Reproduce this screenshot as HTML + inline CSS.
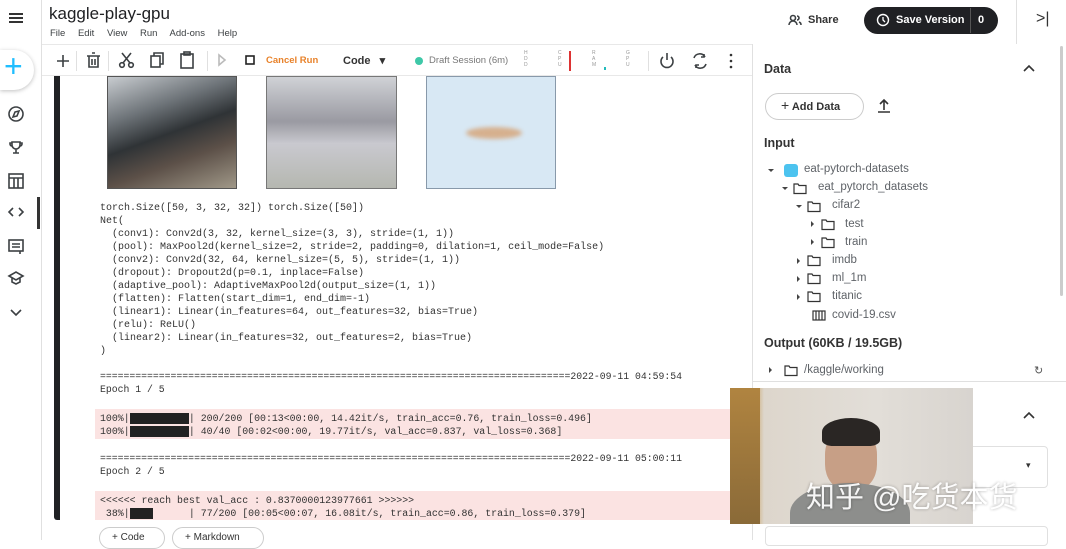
<!DOCTYPE html>
<html><head><meta charset="utf-8"><style>
*{margin:0;padding:0;box-sizing:border-box}
body{width:1066px;height:540px;overflow:hidden;background:#fff;font-family:"Liberation Sans",sans-serif;position:relative;color:#202124}
.a{position:absolute}
.mono{font-family:"Liberation Mono",monospace;font-size:10px;line-height:13px;color:#333;white-space:pre}
.ic{stroke:#3c4043;fill:none;stroke-width:1.6}
.tree{font-size:11.5px;color:#5f6368;white-space:nowrap}
</style></head><body>
<!-- left sidebar -->
<div class="a" style="left:41px;top:0;width:1px;height:540px;background:#e0e0e0"></div>
<div class="a" style="left:9px;top:13px;width:14px;height:2px;background:#333;box-shadow:0 4px 0 #333,0 8px 0 #333"></div>
<div class="a" style="left:0;top:50px;width:34px;height:40px;border-radius:0 20px 20px 0;box-shadow:0 1px 4px rgba(0,0,0,.25);background:#fff"></div>
<div class="a" style="left:4px;top:48px;font-size:32px;color:#20beff;font-weight:300">+</div>
<svg class="a" style="left:6px;top:104px" width="20" height="220" viewBox="0 0 20 220">
<g class="ic" stroke-width="1.5"><circle cx="10" cy="10" r="7"/><path d="M13 7l-2 5-4 1 2-5z"/>
<path d="M6 38h8v3a4 4 0 0 1-8 0zM10 45v4M7 49h6M6 39H4v1a2 2 0 0 0 2 2M14 39h2v1a2 2 0 0 1-2 2"/>
<rect x="3" y="70" width="14" height="14"/><path d="M3 74h14M8 74v10M12 74v10"/>
<path d="M7 104l-4 4 4 4M13 104l4 4-4 4"/>
<rect x="3" y="136" width="14" height="11"/><path d="M6 140h8M6 143h8M14 147v3"/>
<path d="M3 172l7-4 7 4-7 4zM6 174v4l4 2 4-2v-4"/>
<path d="M5 206l5 5 5-5"/></g></svg>
<div class="a" style="left:37px;top:197px;width:3px;height:32px;background:#333"></div>
<!-- title -->
<div class="a" style="left:49px;top:4px;font-size:17px;color:#202124">kaggle-play-gpu</div>
<div class="a" style="left:50px;top:28px;font-size:9.5px;color:#3c4043;word-spacing:10px">File Edit View Run Add-ons Help</div>
<!-- share/save -->
<svg class="a" style="left:788px;top:14px" width="14" height="12"><g class="ic" stroke-width="1.3"><circle cx="5" cy="4" r="2.5"/><path d="M1 11a4 4 0 0 1 8 0M9 2a2 2 0 0 1 0 4M11 8a3 3 0 0 1 2 3"/></g></svg>
<div class="a" style="left:808px;top:14px;font-size:11px;font-weight:bold;color:#333">Share</div>
<div class="a" style="left:864px;top:7px;width:134px;height:27px;border-radius:14px;background:#202124"></div>
<svg class="a" style="left:876px;top:13px" width="14" height="14"><circle cx="7" cy="7" r="5.5" stroke="#fff" fill="none" stroke-width="1.4"/><path d="M7 4v3l2 2" stroke="#fff" fill="none" stroke-width="1.3"/></svg>
<div class="a" style="left:896px;top:14px;font-size:11px;font-weight:bold;color:#fff">Save Version</div>
<div class="a" style="left:970px;top:8px;width:1px;height:25px;background:#555"></div>
<div class="a" style="left:978px;top:14px;font-size:11px;font-weight:bold;color:#fff">0</div>
<div class="a" style="left:1016px;top:0;width:1px;height:44px;background:#e0e0e0"></div>
<div class="a" style="left:1036px;top:10px;font-size:16px;color:#333">&gt;|</div>
<!-- toolbar -->
<div class="a" style="left:42px;top:44px;width:710px;height:1px;background:#e8e8e8"></div>
<div class="a" style="left:42px;top:75px;width:710px;height:1px;background:#e8e8e8"></div>
<svg class="a" style="left:50px;top:50px" width="700" height="22" viewBox="50 50 700 22">
<g class="ic" stroke-width="1.5">
<path d="M63 55v12M57 61h12"/>
<path d="M87 56h13M89 56v11h9V56M92 53h3M92 59v6M95 59v6"/>
<circle cx="122" cy="65" r="2.3"/><circle cx="131" cy="65" r="2.3"/><path d="M123 63l8-10M130 63l-8-10"/>
<rect x="151" y="56" width="9" height="11"/><path d="M154 56v-3h9v11h-3"/>
<rect x="181" y="54" width="12" height="14"/><rect x="184" y="52" width="6" height="3"/>
<path d="M219 55l6 5-6 5z" stroke="#bbb"/>
<rect x="246" y="56" width="8" height="8" stroke="#222"/>
<path d="M663 57a6 6 0 1 0 8 0M667 53v7"/>
<path d="M694 58a6 6 0 0 1 11-1M706 64a6 6 0 0 1-11 1M704 54v3h-3M696 68v-3h3"/>
</g>
<circle cx="731" cy="55" r="1.3" fill="#333"/><circle cx="731" cy="61" r="1.3" fill="#333"/><circle cx="731" cy="67" r="1.3" fill="#333"/>
<circle cx="419" cy="61" r="4" fill="#3ec8a8"/>
<rect x="569" y="51" width="2" height="20" fill="#d33"/>
<rect x="604" y="67" width="2" height="3" fill="#2bb"/>
</svg>
<div class="a" style="left:76px;top:51px;width:1px;height:20px;background:#e0e0e0"></div>
<div class="a" style="left:108px;top:51px;width:1px;height:20px;background:#e0e0e0"></div>
<div class="a" style="left:207px;top:51px;width:1px;height:20px;background:#e0e0e0"></div>
<div class="a" style="left:266px;top:55px;font-size:9.5px;font-weight:bold;color:#e8822a">Cancel Run</div>
<div class="a" style="left:343px;top:54px;font-size:11px;font-weight:bold;color:#333">Code &nbsp;&nbsp;▾</div>
<div class="a" style="left:429px;top:55px;font-size:9.5px;color:#777">Draft Session (6m)</div>
<div class="a" style="left:524px;top:50px;font-size:5px;line-height:6px;color:#999">H<br>D<br>D</div>
<div class="a" style="left:558px;top:50px;font-size:5px;line-height:6px;color:#999">C<br>P<br>U</div>
<div class="a" style="left:592px;top:50px;font-size:5px;line-height:6px;color:#999">R<br>A<br>M</div>
<div class="a" style="left:626px;top:50px;font-size:5px;line-height:6px;color:#999">G<br>P<br>U</div>
<div class="a" style="left:648px;top:51px;width:1px;height:20px;background:#e0e0e0"></div>
<!-- cell -->
<div class="a" style="left:54px;top:76px;width:6px;height:444px;background:#202124;border-radius:0 0 0 3px"></div>
<div class="a" style="left:107px;top:76px;width:130px;height:113px;border:1px solid #555;background:linear-gradient(160deg,#c8ccd0 0%,#6d7378 30%,#2f3336 50%,#5c5048 70%,#a09888 100%)"></div>
<div class="a" style="left:266px;top:76px;width:131px;height:113px;border:1px solid #777;background:linear-gradient(180deg,#d0d2d6 0%,#9a9aa2 40%,#c9c9cf 60%,#b5b7b0 100%)"></div>
<div class="a" style="left:426px;top:76px;width:130px;height:113px;border:1px solid #8899aa;background:#d8e8f4"></div>
<div class="a" style="left:466px;top:127px;width:56px;height:12px;border-radius:50%;background:#d6b08e;filter:blur(2px)"></div>
<div class="a mono" style="left:100px;top:202px">torch.Size([50, 3, 32, 32]) torch.Size([50])
Net(
  (conv1): Conv2d(3, 32, kernel_size=(3, 3), stride=(1, 1))
  (pool): MaxPool2d(kernel_size=2, stride=2, padding=0, dilation=1, ceil_mode=False)
  (conv2): Conv2d(32, 64, kernel_size=(5, 5), stride=(1, 1))
  (dropout): Dropout2d(p=0.1, inplace=False)
  (adaptive_pool): AdaptiveMaxPool2d(output_size=(1, 1))
  (flatten): Flatten(start_dim=1, end_dim=-1)
  (linear1): Linear(in_features=64, out_features=32, bias=True)
  (relu): ReLU()
  (linear2): Linear(in_features=32, out_features=2, bias=True)
)</div>
<div class="a mono" style="left:100px;top:370px;font-size:9.8px">================================================================================2022-09-11 04:59:54
Epoch 1 / 5</div>
<div class="a" style="left:95px;top:409px;width:635px;height:30px;background:#fbe3e2"></div>
<div class="a mono" style="left:100px;top:412px;font-size:9.9px">100%|<span style="background:#222">          </span>| 200/200 [00:13&lt;00:00, 14.42it/s, train_acc=0.76, train_loss=0.496]
100%|<span style="background:#222">          </span>| 40/40 [00:02&lt;00:00, 19.77it/s, val_acc=0.837, val_loss=0.368]</div>
<div class="a mono" style="left:100px;top:452px;font-size:9.8px">================================================================================2022-09-11 05:00:11
Epoch 2 / 5</div>
<div class="a" style="left:95px;top:491px;width:635px;height:29px;background:#fbe3e2"></div>
<div class="a mono" style="left:100px;top:494px;font-size:9.9px">&lt;&lt;&lt;&lt;&lt;&lt; reach best val_acc : 0.8370000123977661 &gt;&gt;&gt;&gt;&gt;&gt;
 38%|<span style="background:#222">    </span>      | 77/200 [00:05&lt;00:07, 16.08it/s, train_acc=0.86, train_loss=0.379]</div>
<div class="a" style="left:99px;top:527px;width:66px;height:22px;border:1px solid #ccc;border-radius:11px;font-size:10px;padding:4px 0 0 12px;color:#333">+ Code</div>
<div class="a" style="left:172px;top:527px;width:92px;height:22px;border:1px solid #ccc;border-radius:11px;font-size:10px;padding:4px 0 0 12px;color:#333">+ Markdown</div>
<!-- right panel -->
<div class="a" style="left:752px;top:44px;width:1px;height:496px;background:#e0e0e0"></div>
<div class="a" style="left:1060px;top:46px;width:3px;height:250px;background:#ccc;border-radius:2px"></div>
<div class="a" style="left:764px;top:62px;font-size:12.5px;font-weight:bold;color:#333">Data</div>
<svg class="a" style="left:1022px;top:63px" width="14" height="10"><path d="M2 8l5-5 5 5" stroke="#333" fill="none" stroke-width="1.6"/></svg>
<div class="a" style="left:765px;top:93px;width:99px;height:27px;border:1px solid #ccc;border-radius:14px;font-size:11px;font-weight:bold;padding:6px 0 0 15px;color:#333"><span style="font-weight:normal;font-size:14px;line-height:10px">+</span> Add Data</div>
<svg class="a" style="left:877px;top:98px" width="14" height="16"><path d="M7 12V2M3 6l4-4 4 4M1 14h12" stroke="#333" fill="none" stroke-width="1.6"/></svg>
<div class="a" style="left:764px;top:136px;font-size:12.5px;font-weight:bold;color:#333">Input</div>
<svg class="a" style="left:760px;top:160px" width="150" height="220" viewBox="760 160 150 220">
<g fill="#444"><path d="M768 169h6l-3 3z"/><path d="M782 187h6l-3 3z"/><path d="M796 205h6l-3 3z"/>
<path d="M811 221v6l3-3z"/><path d="M811 239v6l3-3z"/><path d="M797 258v6l3-3z"/><path d="M797 276v6l3-3z"/><path d="M797 294v6l3-3z"/><path d="M769 367v6l3-3z"/></g>
<g fill="none" stroke="#333" stroke-width="1.2">
<path d="M794 184h4l1 1.5h7v8h-12z"/><path d="M808 202h4l1 1.5h7v8h-12z"/><path d="M822 220h4l1 1.5h7v8h-12z"/><path d="M822 238h4l1 1.5h7v8h-12z"/>
<path d="M808 256h4l1 1.5h7v8h-12z"/><path d="M808 274h4l1 1.5h7v8h-12z"/><path d="M808 292h4l1 1.5h7v8h-12z"/>
<rect x="813" y="311" width="12" height="9"/><path d="M816 311v9M819 311v9M822 311v9"/>
<path d="M785 366h4l1 1.5h7v8h-12z"/></g></svg>
<div class="a" style="left:784px;top:164px;width:14px;height:13px;border-radius:3px;background:#4cc3ef"></div><div class="a tree" style="left:804px;top:163px">eat-pytorch-datasets</div>
<div class="a tree" style="left:818px;top:181px">eat_pytorch_datasets</div>
<div class="a tree" style="left:832px;top:199px">cifar2</div>
<div class="a tree" style="left:845px;top:218px">test</div>
<div class="a tree" style="left:845px;top:236px">train</div>
<div class="a tree" style="left:832px;top:254px">imdb</div>
<div class="a tree" style="left:832px;top:272px">ml_1m</div>
<div class="a tree" style="left:832px;top:290px">titanic</div>
<div class="a tree" style="left:832px;top:309px">covid-19.csv</div>
<div class="a" style="left:764px;top:336px;font-size:12.5px;font-weight:bold;color:#333">Output (60KB / 19.5GB)</div>
<div class="a tree" style="left:804px;top:364px">/kaggle/working</div>
<div class="a" style="left:1034px;top:364px;font-size:11px;color:#555">↻</div>
<div class="a" style="left:752px;top:381px;width:314px;height:1px;background:#e0e0e0"></div>
<svg class="a" style="left:1022px;top:410px" width="14" height="10"><path d="M2 8l5-5 5 5" stroke="#333" fill="none" stroke-width="1.6"/></svg>
<div class="a" style="left:765px;top:446px;width:283px;height:42px;border:1px solid #e0e0e0;border-radius:4px"></div>
<div class="a" style="left:1026px;top:460px;font-size:9px;color:#333">▾</div>
<div class="a" style="left:765px;top:526px;width:283px;height:20px;border:1px solid #e0e0e0;border-radius:4px"></div>
<!-- video -->
<div class="a" style="left:730px;top:388px;width:243px;height:136px;overflow:hidden;background:linear-gradient(90deg,#a47a36 0%,#c79a52 9%,#ddd6cc 14%,#e2ded8 60%,#d8d4cf 100%)">
<div class="a" style="left:0;top:0;width:30px;height:136px;background:linear-gradient(180deg,#b08440,#8a6a38)"></div>
<div class="a" style="left:95px;top:38px;width:52px;height:64px;border-radius:45% 45% 40% 40%;background:#c79f86"></div>
<div class="a" style="left:92px;top:30px;width:58px;height:28px;border-radius:50% 50% 20% 20%;background:#2a2624"></div>
<div class="a" style="left:60px;top:95px;width:120px;height:60px;border-radius:50% 50% 0 0;background:#8d8e8c"></div>
</div>
<div class="a" style="left:806px;top:474px;font-family:'Liberation Sans','Noto Sans CJK SC',sans-serif;font-size:29px;color:#fff;text-shadow:0 0 3px rgba(0,0,0,.35);white-space:nowrap;opacity:.92">知乎 @吃货本货</div>
</body></html>
